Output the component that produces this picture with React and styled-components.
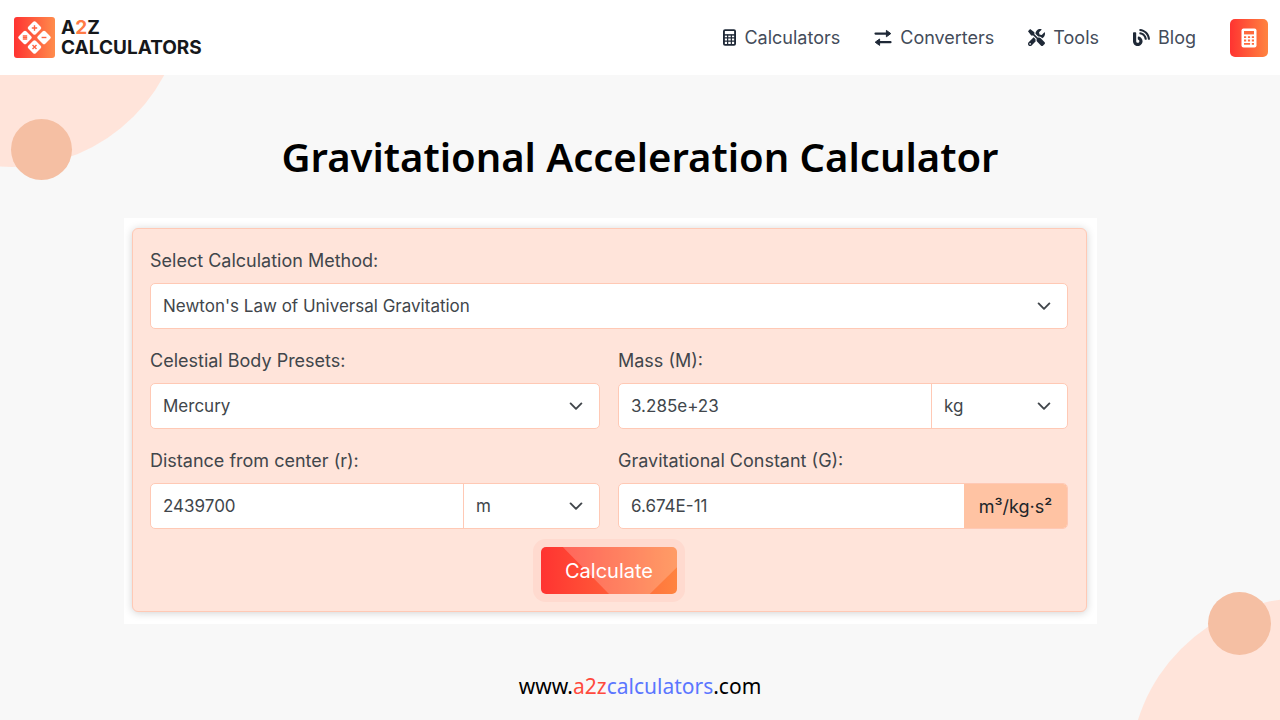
import React from 'react';
import styled, {createGlobalStyle} from 'styled-components';
import {FaBlog, FaTools} from 'react-icons/fa';

const colors = {
  ink: '#1f2937',
  nav: '#444c5a',
  text: '#41464b',
  page: '#f8f8f8',
  blush: '#ffe4da',
  peach: '#f5bfa3',
  border: '#ffc9b5',
  addon: '#ffc3a3',
  gradient: 'linear-gradient(90deg, #ff3331, #ff8440)',
};

const GlobalStyle = createGlobalStyle`
  *, *::before, *::after {
    box-sizing: border-box;
  }

  body {
    margin: 0;
    background: ${colors.page};
    font-family: Inter, sans-serif;
    color: ${colors.text};
  }
`;

const Page = styled.div`
  position: relative;
  min-height: 100vh;
  display: flex;
  flex-direction: column;
  overflow: hidden;
`;

const Blob = styled.div`
  position: absolute;
  width: ${({$size}) => $size}px;
  height: ${({$size}) => $size}px;
  border-radius: 50%;
  background: ${({$color}) => $color};
`;

const BlobLeft = styled(Blob)`
  left: ${({$x}) => $x}px;
  top: ${({$y}) => $y}px;
`;

const BlobRight = styled(Blob)`
  right: ${({$x}) => $x}px;
  bottom: ${({$y}) => $y}px;
`;

const Header = styled.header`
  position: relative;
  height: 75px;
  padding: 0 12px 0 14px;
  display: flex;
  align-items: center;
  justify-content: space-between;
  background: #fff;
`;

const Brand = styled.a`
  display: flex;
  align-items: center;
  gap: 6px;
  color: #16181b;
  font-size: 19px;
  font-weight: 700;
  line-height: 20px;
  text-decoration: none;
`;

const Accent = styled.span`
  color: #ff7a45;
`;

const Nav = styled.nav`
  display: flex;
  align-items: center;
  gap: 34px;
`;

const NavLink = styled.a`
  display: flex;
  align-items: center;
  gap: 8px;
  color: ${colors.nav};
  font-size: 18px;
  line-height: 25px;
  text-decoration: none;

  svg {
    color: ${colors.ink};
  }
`;

const CalculatorButton = styled.button`
  width: 38px;
  height: 38px;
  padding: 0;
  display: flex;
  align-items: center;
  justify-content: center;
  border: 0;
  border-radius: 5px;
  background: ${colors.gradient};
  color: #fff;
`;

const Main = styled.main`
  position: relative;
  flex: 1;
  display: flex;
  flex-direction: column;
`;

const Title = styled.h1`
  margin: 54px 0 33px;
  color: #000;
  font-family: 'Noto Sans', sans-serif;
  font-size: 40px;
  font-weight: 600;
  line-height: 56px;
  text-align: center;
`;

const Sheet = styled.section`
  margin: 0 183px 0 124px;
  padding: 10px 10px 12px 8px;
  background: #fff;
`;

const Form = styled.form`
  padding: 18px 18px 17px 17px;
  display: grid;
  grid-template-columns: 1fr 1fr;
  gap: 18px;
  border: 1px solid ${colors.border};
  border-radius: 6px;
  background: ${colors.blush};
  box-shadow: 0 1px 8px rgba(0, 0, 0, 0.18);
`;

const Field = styled.div`
  grid-column: ${({$wide}) => ($wide ? '1 / -1' : 'auto')};
  min-width: 0;
  display: flex;
  flex-direction: column;
  gap: 8px;
`;

const Label = styled.label`
  font-size: 18px;
  line-height: 28px;
`;

const Group = styled.div`
  height: 46px;
  display: flex;
  border: 1px solid ${colors.border};
  border-radius: 5px;
  background: #fff;
  overflow: hidden;
`;

const TextInput = styled.input`
  flex: 1;
  min-width: 0;
  padding: 0 12px;
  border: 0;
  background: transparent;
  color: ${colors.text};
  font: inherit;
  font-size: 17px;
  outline: 0;
`;

const SelectBox = styled.div`
  position: relative;
  flex: ${({$unit}) => ($unit ? '0 0 136px' : '1')};
  border-left: ${({$unit}) => ($unit ? `1px solid ${colors.border}` : '0')};

  svg {
    position: absolute;
    top: 14px;
    right: 15px;
    pointer-events: none;
  }
`;

const Select = styled.select`
  width: 100%;
  height: 100%;
  padding: 0 40px 0 12px;
  appearance: none;
  border: 0;
  background: transparent;
  color: ${colors.text};
  font: inherit;
  font-size: 17px;
  outline: 0;
`;

const Addon = styled.span`
  flex: 0 0 103px;
  display: flex;
  align-items: center;
  justify-content: center;
  background: ${colors.addon};
  color: #212529;
  font-size: 18px;
`;

const Actions = styled.div`
  grid-column: 1 / -1;
  display: flex;
  justify-content: center;
`;

const SubmitButton = styled.button`
  position: relative;
  width: 136px;
  height: 47px;
  padding: 0;
  border: 0;
  border-radius: 5px;
  background: ${colors.gradient};
  box-shadow: 0 0 0 8px #ffdacf;
  color: #fff;
  font: inherit;
  font-size: 20px;

  &::before {
    content: '';
    position: absolute;
    inset: 0;
    border-radius: 5px;
    background: rgba(255, 255, 255, 0.2);
    clip-path: polygon(16% 0, 100% 0, 100% 43%, 80% 100%, 50% 100%);
  }
`;

const SubmitText = styled.span`
  position: relative;
`;

const Footer = styled.footer`
  position: relative;
  padding: 0 0 19px;
  color: #000;
  font-family: 'Noto Sans', sans-serif;
  font-size: 21px;
  line-height: 30px;
  text-align: center;
`;

const SiteLink = styled.a`
  color: inherit;
  text-decoration: none;
`;

const Red = styled.span`
  color: #ff4a3d;
`;

const Blue = styled.span`
  color: #5b76ff;
`;

const Key = ({x, y, children}) => (
  <g transform={`translate(${x} ${y})`}>
    <rect x="-5.3" y="-5.3" width="10.6" height="10.6" rx="1.8" fill="#fff" transform="rotate(45)" />
    <path d={children} stroke="#ff6242" strokeWidth="1.4" fill="none" />
  </g>
);

const LogoMark = () => (
  <svg width="41" height="41" viewBox="0 0 41 41" aria-hidden="true">
    <defs>
      <linearGradient id="mark">
        <stop offset="0" stopColor="#ff3331" />
        <stop offset="1" stopColor="#ff8c4c" />
      </linearGradient>
    </defs>
    <rect width="41" height="41" rx="3" fill="url(#mark)" />
    <Key x={20.5} y={11}>M-2.7 0H2.7M0 -2.7V2.7</Key>
    <Key x={11} y={20.5}>M-2.2 -1.6H2.2M-2.2 0H2.2M-2.2 1.6H2.2</Key>
    <Key x={30} y={20.5}>M-2.4 0H2.4</Key>
    <Key x={20.5} y={30}>M-2 -2L2 2M2 -2L-2 2</Key>
  </svg>
);

const CalculatorIcon = () => (
  <svg width="13" height="17" viewBox="0 0 14 18" fill="none" stroke="currentColor" aria-hidden="true">
    <rect x="1" y="1" width="12" height="16" rx="1.2" strokeWidth="2" />
    <path d="M1 6.2H13" strokeWidth="1.6" />
    <path d="M1 9.5H13M1 12.8H13M5 6V16.5M9 6V16.5" strokeWidth="1.3" />
  </svg>
);

const ConvertIcon = () => (
  <svg width="18" height="18" viewBox="0 0 18 18" aria-hidden="true">
    <path d="M1.5 4.6H13M5 13.2H16.5" stroke="currentColor" strokeWidth="2.2" strokeLinecap="round" />
    <path
      d="M12.4 1.4L16.8 4.6L12.4 7.8ZM5.6 10L1.2 13.2L5.6 16.4Z"
      fill="currentColor"
      stroke="currentColor"
      strokeLinejoin="round"
    />
  </svg>
);

const KeypadIcon = () => (
  <svg width="16" height="20" viewBox="0 0 16 20" aria-hidden="true">
    <rect x="0.5" y="0.5" width="15" height="19" rx="2" fill="currentColor" />
    <rect x="3" y="3" width="10" height="3.4" fill="#ff6a3d" />
    <path
      d="M3 9.2H5.2M6.9 9.2H9.1M10.8 9.2H13M3 12.5H5.2M6.9 12.5H9.1M10.8 12.5H13M3 15.8H9.1M10.8 15.8H13"
      stroke="#ff6a3d"
      strokeWidth="1.8"
    />
  </svg>
);

const Chevron = () => (
  <svg width="16" height="16" viewBox="0 0 16 16" fill="none" aria-hidden="true">
    <path d="M2.6 5.4L8 10.8L13.4 5.4" stroke="#41464b" strokeWidth="1.9" strokeLinecap="round" strokeLinejoin="round" />
  </svg>
);

const Dropdown = ({id, unit, label, options}) => (
  <SelectBox $unit={unit}>
    <Select id={id} aria-label={label}>
      {options.map((option) => (
        <option key={option}>{option}</option>
      ))}
    </Select>
    <Chevron />
  </SelectBox>
);

const App = () => (
  <Page>
    <GlobalStyle />
    <BlobLeft $size={344} $x={-160} $y={-177} $color={colors.blush} />
    <BlobLeft $size={61} $x={11} $y={119} $color={colors.peach} />
    <BlobRight $size={348} $x={-198} $y={-226} $color={colors.blush} />
    <BlobRight $size={63} $x={9} $y={65} $color={colors.peach} />

    <Header>
      <Brand href="#">
        <LogoMark />
        <span>
          A<Accent>2</Accent>Z<br />
          CALCULATORS
        </span>
      </Brand>
      <Nav>
        <NavLink href="#">
          <CalculatorIcon />
          Calculators
        </NavLink>
        <NavLink href="#">
          <ConvertIcon />
          Converters
        </NavLink>
        <NavLink href="#">
          <FaTools size={17} />
          Tools
        </NavLink>
        <NavLink href="#">
          <FaBlog size={17} />
          Blog
        </NavLink>
        <CalculatorButton aria-label="Open calculator">
          <KeypadIcon />
        </CalculatorButton>
      </Nav>
    </Header>

    <Main>
      <Title>Gravitational Acceleration Calculator</Title>
      <Sheet>
        <Form onSubmit={(e) => e.preventDefault()}>
          <Field $wide>
            <Label htmlFor="method">Select Calculation Method:</Label>
            <Group>
              <Dropdown id="method" options={["Newton's Law of Universal Gravitation"]} />
            </Group>
          </Field>
          <Field>
            <Label htmlFor="preset">Celestial Body Presets:</Label>
            <Group>
              <Dropdown id="preset" options={['Mercury']} />
            </Group>
          </Field>
          <Field>
            <Label htmlFor="mass">Mass (M):</Label>
            <Group>
              <TextInput id="mass" defaultValue="3.285e+23" />
              <Dropdown unit label="Mass unit" options={['kg']} />
            </Group>
          </Field>
          <Field>
            <Label htmlFor="distance">Distance from center (r):</Label>
            <Group>
              <TextInput id="distance" defaultValue="2439700" />
              <Dropdown unit label="Distance unit" options={['m']} />
            </Group>
          </Field>
          <Field>
            <Label htmlFor="constant">Gravitational Constant (G):</Label>
            <Group>
              <TextInput id="constant" defaultValue="6.674E-11" />
              <Addon>m³/kg·s²</Addon>
            </Group>
          </Field>
          <Actions>
            <SubmitButton type="submit">
              <SubmitText>Calculate</SubmitText>
            </SubmitButton>
          </Actions>
        </Form>
      </Sheet>
    </Main>

    <Footer>
      <SiteLink href="#">
        www.<Red>a2z</Red>
        <Blue>calculators</Blue>.com
      </SiteLink>
    </Footer>
  </Page>
);

export default App;
